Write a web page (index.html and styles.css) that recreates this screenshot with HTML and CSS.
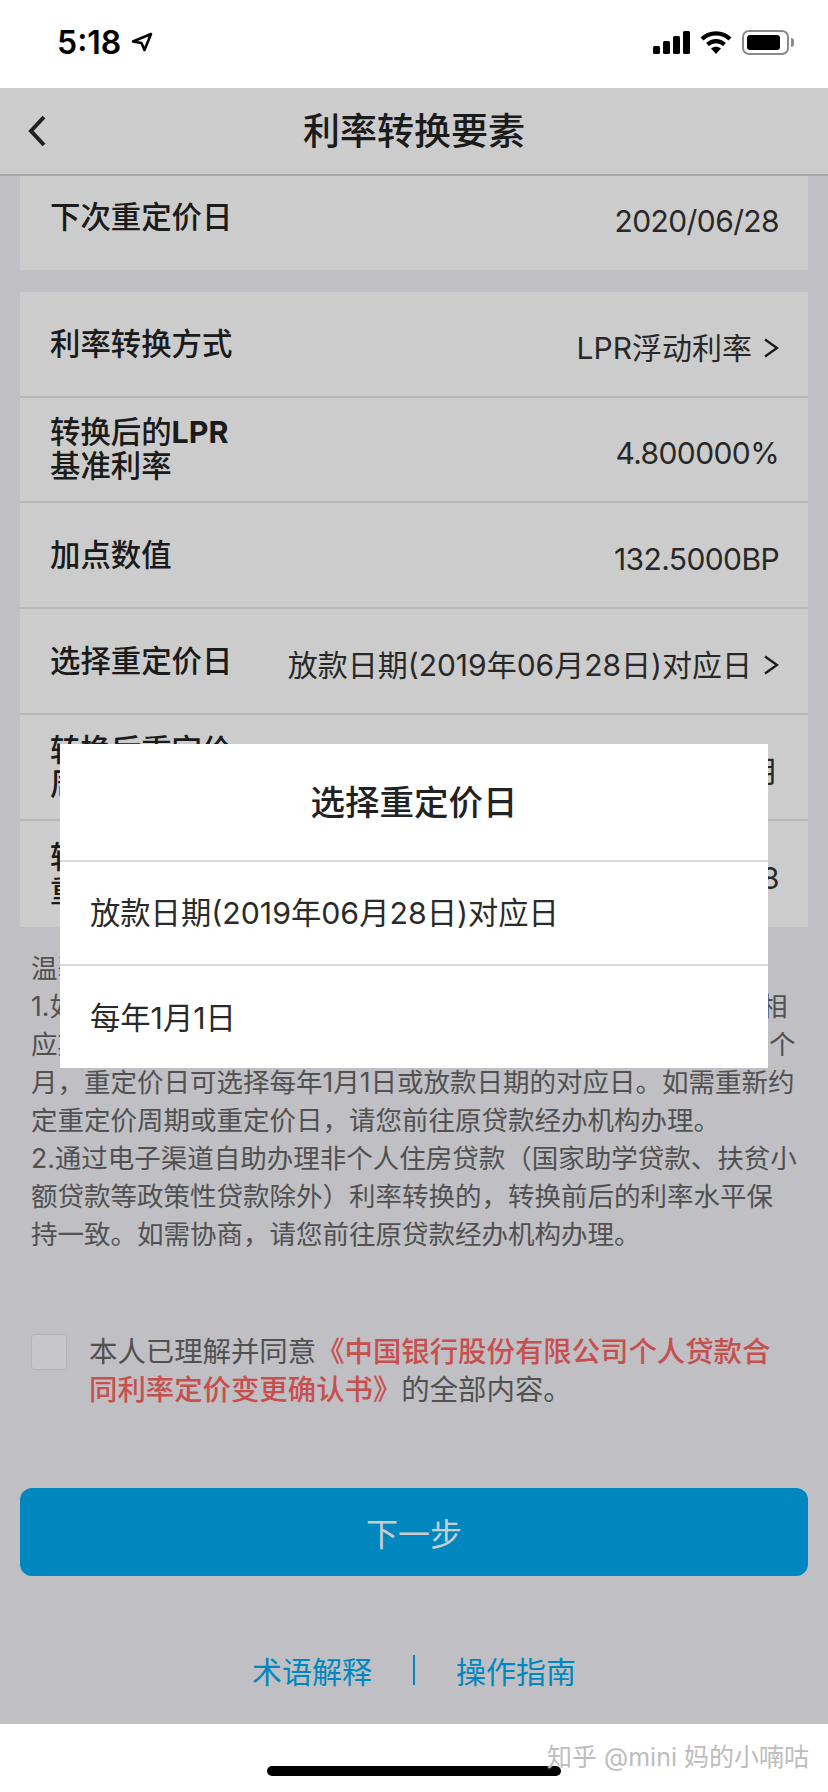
FILE: index.html
```html
<!DOCTYPE html>
<html lang="zh-CN">
  <head>
    <meta charset="UTF-8" />
    <meta name="viewport" content="width=device-width, initial-scale=1.0" />
    <title>利率转换要素</title>
    <link rel="stylesheet" href="styles.css">
  </head>
  <body>
    <!-- Status bar -->
    <div class="status-bar">
      <div class="status-left">
        <span class="time">5:18</span>
        <svg class="locate-icon" width="22" height="20" viewBox="0 0 22 20">
          <path d="M2 9.5 L20 2 L13.5 18 L10.5 11 Z" fill="none" stroke="#000" stroke-width="2.6" stroke-linejoin="round" />
        </svg>
      </div>
      <div class="status-right">
        <svg width="37" height="23" viewBox="0 0 37 23">
          <rect x="0" y="15" width="7" height="8" rx="1.5" fill="#000" />
          <rect x="10" y="10" width="7" height="13" rx="1.5" fill="#000" />
          <rect x="20" y="5" width="7" height="18" rx="1.5" fill="#000" />
          <rect x="30" y="0" width="7" height="23" rx="1.5" fill="#000" />
        </svg>
        <svg width="32" height="23" viewBox="0 0 32 23">
          <path d="M2 8 C10 0.5 22 0.5 30 8" fill="none" stroke="#000" stroke-width="4.4" />
          <path d="M7.5 13.5 C12.5 9 19.5 9 24.5 13.5" fill="none" stroke="#000" stroke-width="4.2" />
          <path d="M11 17.5 C14 15 18 15 21 17.5 L16 23 Z" fill="#000" />
        </svg>
        <div class="battery">
          <div class="battery-body"><div class="battery-fill"></div></div>
          <div class="battery-nub"></div>
        </div>
      </div>
    </div>

    <div class="app">
      <div class="nav">
        <svg class="back-icon" width="20" height="32" viewBox="0 0 20 32">
          <path d="M17 2 L4 16 L17 30" fill="none" stroke="#2a2a2a" stroke-width="4" />
        </svg>
        <h1>利率转换要素</h1>
      </div>

      <div class="scroll">
        <div class="scroll-inner">
          <div class="section">
            <div class="row">
              <div class="label">下次重定价日</div>
              <div class="value num">2020/06/28</div>
            </div>
          </div>

          <div class="section">
            <div class="row">
              <div class="label">利率转换方式</div>
              <div class="value">LPR浮动利率<svg class="chevron" width="16" height="20" viewBox="0 0 16 20"><path d="M2 1.5 L14 10 L2 18.5" fill="none" stroke="#222" stroke-width="2.4" /></svg></div>
            </div>
            <div class="row">
              <div class="label">转换后的<b>LPR</b><br>基准利率</div>
              <div class="value num">4.800000%</div>
            </div>
            <div class="row">
              <div class="label">加点数值</div>
              <div class="value num">132.5000BP</div>
            </div>
            <div class="row">
              <div class="label">选择重定价日</div>
              <div class="value">放款日期(2019年06月28日)对应日<svg class="chevron" width="16" height="20" viewBox="0 0 16 20"><path d="M2 1.5 L14 10 L2 18.5" fill="none" stroke="#222" stroke-width="2.4" /></svg></div>
            </div>
            <div class="row">
              <div class="label">转换后重定价<br>周期</div>
              <div class="value">12个月</div>
            </div>
            <div class="row">
              <div class="label">转换后首次<br>重定价日</div>
              <div class="value num">2020/06/28</div>
            </div>
          </div>

          <div class="notes">
            温馨提示：<br>
            1.如您选择转换为LPR利率，重定价周期将按合同约定执行，以相<br>
            应期限的LPR利率加点数值重新确定，其重定价周期最短为十二个<br>
            月，重定价日可选择每年1月1日或放款日期的对应日。如需重新约<br>
            定重定价周期或重定价日，请您前往原贷款经办机构办理。<br>
            2.通过电子渠道自助办理非个人住房贷款（国家助学贷款、扶贫小<br>
            额贷款等政策性贷款除外）利率转换的，转换前后的利率水平保<br>
            持一致。如需协商，请您前往原贷款经办机构办理。
          </div>

          <div class="agree">
            <div class="checkbox"></div>
            <p>本人已理解并同意<span class="agree-link">《中国银行股份有限公司个人贷款合同利率定价变更确认书》</span>的全部内容。</p>
          </div>

          <button class="next-btn">下一步</button>

          <div class="links">
            <a>术语解释</a>
            <span class="links-sep"></span>
            <a>操作指南</a>
          </div>
        </div>
      </div>

      <div class="scrim"></div>

      <!-- Picker dialog -->
      <div class="dialog">
        <div class="dialog-title">选择重定价日</div>
        <div class="dialog-item">放款日期(2019年06月28日)对应日</div>
        <div class="dialog-item">每年1月1日</div>
      </div>
    </div>

    <div class="home-area">
      <div class="home-bar"></div>
      <div class="watermark">知乎 @mini 妈的小喃咕</div>
    </div>
  </body>
</html>
```

FILE: styles.css
```css
* {
  box-sizing: border-box;
}
body {
  margin: 0;
  width: 828px;
  height: 1792px;
  overflow: hidden;
  background: white;
  color: #2a2a2a;
  font-family: Inter, "Noto Sans CJK SC", sans-serif;
}

/* status bar */
.status-bar {
  height: 88px;
  padding: 0 34px 4px 57px;
  display: flex;
  justify-content: space-between;
  align-items: center;
  background: white;
}
.status-left {
  display: flex;
  align-items: center;
  gap: 10px;
}
.time {
  font-size: 32px;
  font-weight: 600;
  color: #000;
}
.status-right {
  display: flex;
  align-items: center;
  gap: 10px;
}
.battery {
  display: flex;
  align-items: center;
  gap: 2px;
}
.battery-body {
  width: 47px;
  height: 25px;
  padding: 3px;
  border: 2px solid #8a8a8a;
  border-radius: 7px;
}
.battery-fill {
  width: 33px;
  height: 100%;
  background: #000;
  border-radius: 3px;
}
.battery-nub {
  width: 3px;
  height: 9px;
  background: #8a8a8a;
  border-radius: 0 3px 3px 0;
}

/* app area */
.app {
  position: relative;
  height: 1636px;
  background: #f0f0f5;
  overflow: hidden;
}
.nav {
  position: relative;
  z-index: 1;
  height: 88px;
  border-bottom: 2px solid #d2d2d2;
  background: white;
  display: flex;
  align-items: center;
  justify-content: center;
}
.nav h1 {
  margin: 0 0 4px;
  font-size: 37px;
  font-weight: 500;
  color: #222;
}
.back-icon {
  position: absolute;
  left: 27px;
  top: 27px;
}
.scroll-inner {
  margin-top: -12px;
  padding: 0 20px;
}
.section {
  background: white;
  margin-bottom: 22px;
}
.row {
  height: 105.8px;
  padding: 0 29px 0 30px;
  display: flex;
  justify-content: space-between;
  align-items: center;
  border-bottom: 2px solid #e4e4e4;
}
.row:last-child {
  border-bottom: none;
}
.label {
  font-size: 30.4px;
  font-weight: 500;
  line-height: 34px;
  color: #222;
}
.label b {
  font-weight: 700;
}
.value {
  padding-top: 8px;
  font-size: 30px;
  line-height: 36px;
  color: #333;
  display: flex;
  align-items: center;
  gap: 11px;
}
.value.num {
  letter-spacing: -0.6px;
}
.notes {
  padding: 0 11px;
  font-size: 26.5px;
  line-height: 38px;
  color: #666;
  white-space: nowrap;
}
.agree {
  margin: 80px 11px 0;
  display: flex;
  gap: 22px;
}
.checkbox {
  flex: none;
  width: 36px;
  height: 36px;
  margin-top: 1px;
  background: #f9f9fc;
  border: 1px solid #e2e2e2;
  border-radius: 4px;
}
.agree p {
  margin: 0;
  max-width: 695px;
  font-size: 28.4px;
  line-height: 38px;
  color: #666;
}
.agree-link {
  color: #f96463;
  font-weight: 500;
}
.next-btn {
  display: block;
  width: 100%;
  height: 88px;
  margin-top: 79px;
  border: none;
  border-radius: 12px;
  background: #00a9f0;
  color: white;
  font-family: inherit;
  font-size: 32px;
}
.links {
  margin-top: 72px;
  display: flex;
  justify-content: center;
  align-items: center;
  gap: 41px;
  font-size: 30px;
  color: #00a9f0;
}
.links-sep {
  width: 2px;
  height: 30px;
  background: #00a9f0;
}

/* dimmed backdrop and dialog */
.scrim {
  position: absolute;
  inset: 0;
  z-index: 2;
  background: rgba(0, 0, 0, 0.2);
}
.dialog {
  position: absolute;
  z-index: 3;
  left: 60px;
  top: 656px;
  width: 708px;
  height: 324px;
  background: white;
}
.dialog-title {
  height: 118px;
  padding-bottom: 4px;
  display: flex;
  align-items: center;
  justify-content: center;
  border-bottom: 2px solid #d9d9d9;
  font-size: 34.5px;
  font-weight: 500;
  color: #222;
}
.dialog-item {
  height: 104px;
  padding: 0 0 4px 30px;
  display: flex;
  align-items: center;
  border-bottom: 2px solid #d9d9d9;
  font-size: 30.3px;
  color: #2a2a2a;
}
.dialog-item:last-child {
  border-bottom: none;
}

/* bottom strip */
.home-area {
  position: relative;
  height: 68px;
  background: white;
}
.home-bar {
  position: absolute;
  left: 267px;
  top: 42px;
  width: 294px;
  height: 10px;
  border-radius: 5px;
  background: #000;
}
.watermark {
  position: absolute;
  right: 19px;
  top: 18px;
  font-size: 25px;
  line-height: 30px;
  white-space: nowrap;
  color: #bdbdbd;
  text-shadow: 0 0 2px white;
}
```
